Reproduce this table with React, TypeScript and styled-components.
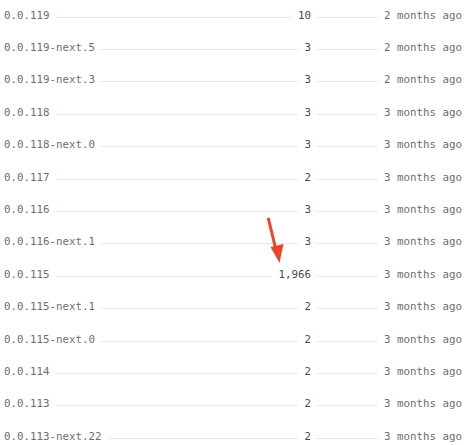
import styled, { createGlobalStyle } from "styled-components";

const GlobalStyle = createGlobalStyle`
  html, body {
    margin: 0;
    padding: 0;
    background: #ffffff;
  }
`;

const Page = styled.div`
  position: relative;
  width: 474px;
  height: 445px;
  overflow: hidden;
  padding: 0 12px 0 4px;
  box-sizing: border-box;
  font-family: "DejaVu Sans Mono", "Liberation Mono", monospace;
  font-size: 10.8px;
`;

const List = styled.div`
  margin-top: -1px;
  display: flex;
  flex-direction: column;
`;

const Row = styled.div`
  display: flex;
  align-items: center;
  gap: 6px;
  height: 32.4px;
  white-space: nowrap;
`;

const Version = styled.span`
  color: #6e6e6e;
`;

const Rule = styled.span<{ $width?: number }>`
  flex: ${(p) => (p.$width ? `0 0 ${p.$width}px` : "1 1 auto")};
  height: 1px;
  margin-top: 4px;
  background: #e8e8e8;
`;

const Downloads = styled.span`
  color: #4a4a4a;
  text-align: right;
`;

const Published = styled.span`
  color: #6e6e6e;
`;

const Arrow = styled.svg`
  position: absolute;
  left: 262px;
  top: 214px;
`;

const versions = [
  { v: "0.0.119", d: "10", t: "2 months ago" },
  { v: "0.0.119-next.5", d: "3", t: "2 months ago" },
  { v: "0.0.119-next.3", d: "3", t: "2 months ago" },
  { v: "0.0.118", d: "3", t: "3 months ago" },
  { v: "0.0.118-next.0", d: "3", t: "3 months ago" },
  { v: "0.0.117", d: "2", t: "3 months ago" },
  { v: "0.0.116", d: "3", t: "3 months ago" },
  { v: "0.0.116-next.1", d: "3", t: "3 months ago" },
  { v: "0.0.115", d: "1,966", t: "3 months ago" },
  { v: "0.0.115-next.1", d: "2", t: "3 months ago" },
  { v: "0.0.115-next.0", d: "2", t: "3 months ago" },
  { v: "0.0.114", d: "2", t: "3 months ago" },
  { v: "0.0.113", d: "2", t: "3 months ago" },
  { v: "0.0.113-next.22", d: "2", t: "3 months ago" },
];

export default function App() {
  return (
    <Page>
      <GlobalStyle />
      <List>
        {versions.map((r) => (
          <Row key={r.v}>
            <Version>{r.v}</Version>
            <Rule />
            <Downloads>{r.d}</Downloads>
            <Rule $width={61} />
            <Published>{r.t}</Published>
          </Row>
        ))}
      </List>
      <Arrow width="30" height="54" viewBox="0 0 30 54">
        <line x1="6.5" y1="5" x2="13.5" y2="34" stroke="#e8452a" strokeWidth="3" strokeLinecap="round" />
        <polygon points="8.5,33 21.5,30 17.5,49" fill="#e8452a" />
      </Arrow>
    </Page>
  );
}
